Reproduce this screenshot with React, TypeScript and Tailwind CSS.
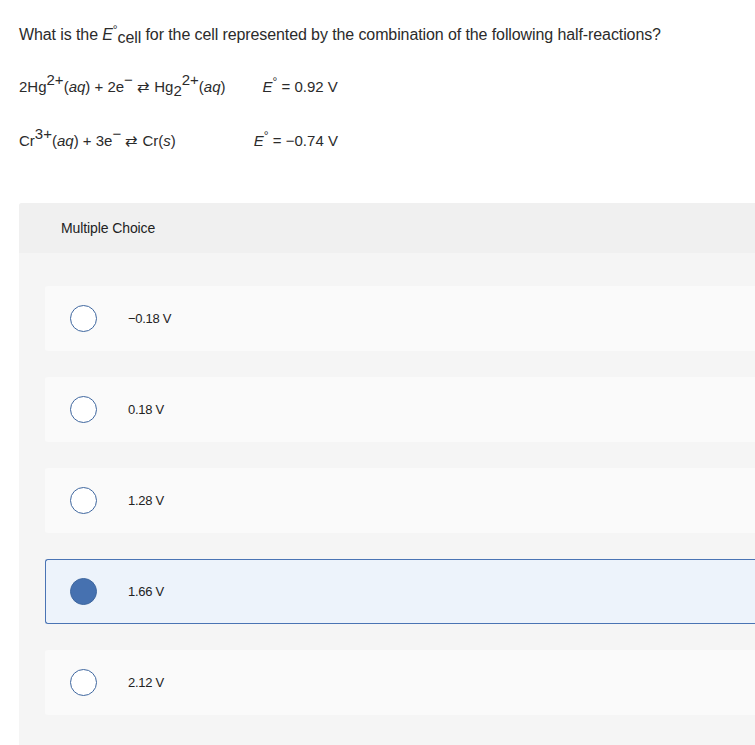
import React from "react";

const options = [
  { id: "a", label: "\u22120.18 V" },
  { id: "b", label: "0.18 V" },
  { id: "c", label: "1.28 V" },
  { id: "d", label: "1.66 V" },
  { id: "e", label: "2.12 V" },
];

const Estd: React.FC = () => (
  <>
    <i>E</i>
    <span className="text-[12px] align-top leading-none relative -top-[1px]">
      °
    </span>
  </>
);

const Choice: React.FC<{ label: string; selected?: boolean }> = ({
  label,
  selected,
}) => (
  <div
    className={`flex items-center h-[65px] rounded-l-[3px] ${
      selected
        ? "bg-[#edf3fb] border border-r-0 border-[#4a74b4]"
        : "bg-[#fafafa]"
    }`}
  >
    <div className={selected ? "ml-[24px]" : "ml-[25px]"}>
      <div
        className={`w-[27px] h-[27px] rounded-full border-[1.5px] border-[#3f679f] ${
          selected ? "bg-[#4671b0]" : "bg-white"
        }`}
      />
    </div>
    <span className="ml-[31px] text-[13px] text-[#222] tracking-[-0.3px]">
      {label}
    </span>
  </div>
);

const App: React.FC = () => {
  return (
    <div
      className="w-[755px] h-[745px] overflow-hidden bg-white text-[#2b2b2b]"
      style={{ fontFamily: '"Liberation Sans", Arial, sans-serif' }}
    >
      <div className="pl-[19px] pt-[25px]">
        <p className="text-[16px] leading-[20px] tracking-[-0.1px]">
          What is the <Estd />
          <sub className="text-[16px] relative top-[3px]">cell</sub> for the
          cell represented by the combination of the following half-reactions?
        </p>

        <div className="mt-[32px] text-[15px] leading-[20px] flex items-center">
          <span>
            2Hg<sup className="text-[15px]">2+</sup>(<i>aq</i>) + 2e
            <sup className="text-[15px]">−</sup> ⇄ Hg
            <sub className="text-[15px]">2</sub>
            <sup className="text-[15px]">2+</sup>(<i>aq</i>)
          </span>
          <span className="ml-[37px]">
            <Estd /> = 0.92 V
          </span>
        </div>

        <div className="mt-[34px] text-[15px] leading-[20px] flex items-center">
          <span>
            Cr<sup className="text-[15px]">3+</sup>(<i>aq</i>) + 3e
            <sup className="text-[15px]">−</sup> ⇄ Cr(<i>s</i>)
          </span>
          <span className="ml-[78px]">
            <Estd /> = −0.74 V
          </span>
        </div>
      </div>

      <div className="ml-[19px] mt-[52px] rounded-tl-[3px] bg-[#f5f5f5] h-[600px]">
        <div className="h-[50px] bg-[#f0f0f0] flex items-center pl-[42px] rounded-tl-[3px]">
          <span className="text-[14px] text-[#222] tracking-[-0.1px]">
            Multiple Choice
          </span>
        </div>
        <div className="pl-[26px] pt-[33px] flex flex-col gap-[26px]">
          {options.map((o) => (
            <Choice key={o.id} label={o.label} selected={o.id === "d"} />
          ))}
        </div>
      </div>
    </div>
  );
};

export default App;
